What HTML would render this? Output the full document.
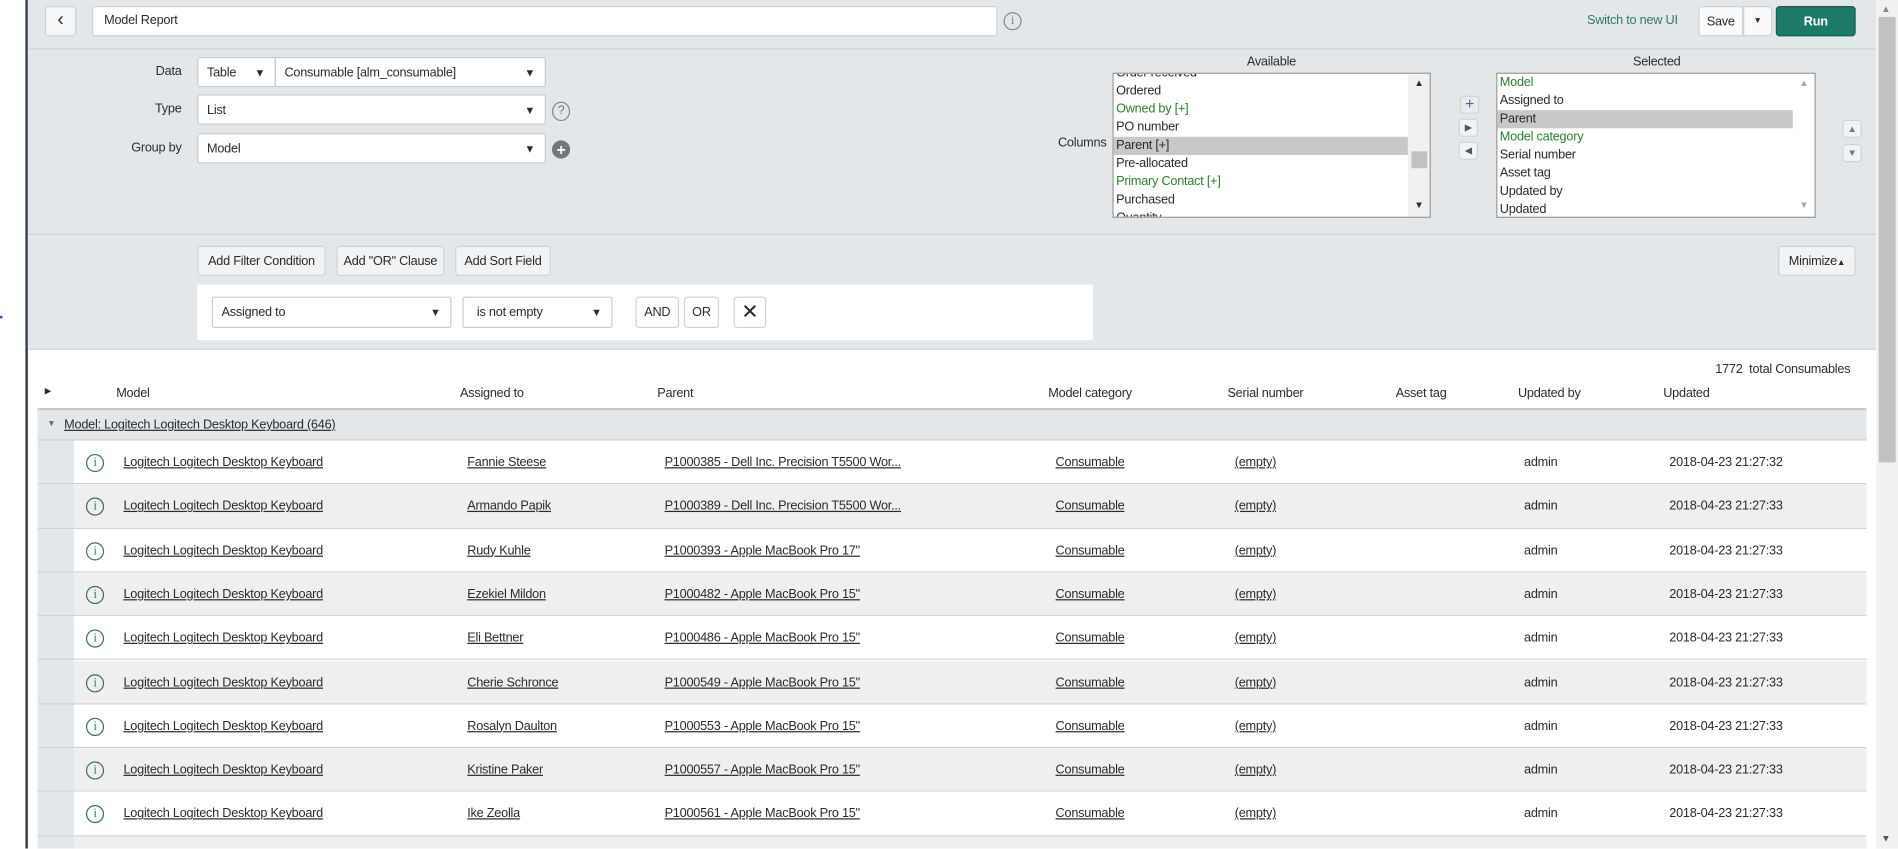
<!DOCTYPE html>
<html><head><meta charset="utf-8"><style>
*{box-sizing:border-box;margin:0;padding:0}
html,body{width:1898px;height:849px;overflow:hidden;background:#fff}
#s{position:absolute;left:0;top:0;width:1568px;height:701px;overflow:hidden;transform:scale(1.2105);transform-origin:0 0;font-family:"Liberation Sans",sans-serif;font-size:10.5px;letter-spacing:-0.2px;color:#2b2b2b;white-space:nowrap}
.a{position:absolute}
.box{position:absolute;background:#fff;border:1px solid #cfd3d6;border-radius:2px}
.btn{position:absolute;background:#f2f3f4;border:1px solid #cfd3d6;border-radius:3px;text-align:center;line-height:24px;color:#2b2b2b}
.sel{position:absolute;background:#fff;border:1px solid #c8ccd0;border-radius:2px;padding-left:7px;line-height:24px}
.sel:after{content:"▼";position:absolute;right:8px;top:0;font-size:9px}
.g{color:#2e7d32}
.li{height:15px;line-height:15px;padding-left:2px}
u{text-decoration:underline}
.row{position:absolute;left:31px;width:1511px;height:36.3px;border-bottom:1px solid #d0d3d6}
.row .c{position:absolute;top:0;line-height:36px}
.ic{position:absolute;left:40px;top:11px;width:15px;height:15px;border:1px solid #3c6e63;border-radius:50%;color:#3c6e63;font-size:10px;text-align:center;line-height:13px;font-family:"Liberation Serif",serif}
</style></head><body><div id="s">
<div class="a" style="left:0;top:0;width:21px;height:701px;background:#fff"></div>
<div class="a" style="left:0;top:261px;width:2px;height:2px;background:#3344aa"></div>
<div class="a" style="left:21px;top:0;width:2px;height:701px;background:#2f3b42"></div>
<div class="a" style="left:23px;top:0;width:1527px;height:288px;background:#e4e7ea"></div>
<div class="a" style="left:23px;top:40px;width:1527px;height:1px;background:#cfd3d6"></div>
<div class="a" style="left:23px;top:193px;width:1527px;height:1px;background:#cfd3d6"></div>
<div class="a" style="left:23px;top:288px;width:1527px;height:1px;background:#cfd3d6"></div>
<!-- scrollbar -->
<div class="a" style="left:1550px;top:0;width:18px;height:701px;background:#f1f1f1"></div>
<div class="a" style="left:1552px;top:14px;width:14px;height:368px;background:#c1c1c1"></div>
<div class="a" style="left:1554px;top:3px;font-size:8px;color:#888">▲</div>
<div class="a" style="left:1554px;top:688px;font-size:8px;color:#555">▼</div>
<!-- header -->
<div class="btn" style="left:37px;top:5px;width:26px;height:25px;font-size:16px;line-height:22px;background:#f5f6f7">‹</div>
<div class="box" style="left:76px;top:5px;width:748px;height:25px;line-height:23px;padding-left:9px">Model Report</div>
<div class="a" style="left:829px;top:10px;width:15px;height:15px;border:1px solid #888;border-radius:50%;text-align:center;font-size:10px;line-height:13px;color:#777;font-family:'Liberation Serif',serif">i</div>
<div class="a" style="left:1311px;top:11px;color:#2d7a6b">Switch to new UI</div>
<div class="btn" style="left:1403px;top:5px;width:37px;height:25px;background:#fafafa;border-radius:3px 0 0 3px">Save</div>
<div class="btn" style="left:1440px;top:5px;width:24px;height:25px;background:#fafafa;font-size:7px;border-radius:0 3px 3px 0">▼</div>
<div class="btn" style="left:1467px;top:5px;width:66px;height:25px;background:#1d7a69;border-color:#15604f;color:#fff;font-weight:bold">Run</div>
<!-- config -->
<div class="a" style="left:100px;top:53px;width:50px;text-align:right">Data</div>
<div class="sel" style="left:163px;top:47px;width:65px;height:25px">Table</div>
<div class="sel" style="left:227px;top:47px;width:224px;height:25px">Consumable [alm_consumable]</div>
<div class="a" style="left:100px;top:84px;width:50px;text-align:right">Type</div>
<div class="sel" style="left:163px;top:78px;width:288px;height:25px">List</div>
<div class="a" style="left:456px;top:84px;width:15px;height:16px;border:1px solid #888;border-radius:50%;text-align:center;font-size:10px;line-height:14px;color:#777">?</div>
<div class="a" style="left:90px;top:116px;width:60px;text-align:right">Group by</div>
<div class="sel" style="left:163px;top:110px;width:288px;height:25px">Model</div>
<div class="a" style="left:456px;top:116px;width:15px;height:15px;background:#777;border-radius:50%;text-align:center;font-size:13px;line-height:15px;color:#fff;font-weight:bold">+</div>
<div class="a" style="left:874px;top:112px">Columns</div>
<div class="a" style="left:1030px;top:45px">Available</div>
<div class="a" style="left:1349px;top:45px">Selected</div>
<div class="box" style="left:919px;top:60px;width:263px;height:120px;overflow:hidden;border-color:#999;border-radius:0">
 <div style="margin-top:-8px">
 <div class="li">Order received</div><div class="li">Ordered</div><div class="li g">Owned by [+]</div><div class="li">PO number</div><div class="li" style="background:#c8c8c8;width:244px">Parent [+]</div><div class="li">Pre-allocated</div><div class="li g">Primary Contact [+]</div><div class="li">Purchased</div><div class="li">Quantity</div></div>
 <div class="a" style="right:0;top:0;width:18px;height:118px;background:#f1f1f1"></div>
 <div class="a" style="right:2px;top:64px;width:13px;height:14px;background:#c1c1c1"></div>
 <div class="a" style="right:5px;top:3px;font-size:8px">▲</div><div class="a" style="right:5px;top:104px;font-size:8px">▼</div>
</div>
<div class="box" style="left:1236px;top:60px;width:264px;height:120px;overflow:hidden;border-color:#999;border-radius:0;padding-top:0">
 <div class="li g">Model</div><div class="li">Assigned to</div><div class="li" style="background:#c8c8c8;width:244px">Parent</div><div class="li g">Model category</div><div class="li">Serial number</div><div class="li">Asset tag</div><div class="li">Updated by</div><div class="li">Updated</div>
 <div class="a" style="right:5px;top:3px;font-size:8px;color:#aaa">▲</div><div class="a" style="right:5px;top:104px;font-size:8px;color:#aaa">▼</div>
</div>
<div class="btn" style="left:1206px;top:79px;width:16px;height:15px;line-height:12px;font-size:13px;color:#4a6a8a;background:#e9ecef">+</div>
<div class="btn" style="left:1205px;top:98px;width:16px;height:15px;line-height:13px;font-size:8px;color:#555">▶</div>
<div class="btn" style="left:1205px;top:117px;width:16px;height:15px;line-height:13px;font-size:8px;color:#555">◀</div>
<div class="btn" style="left:1522px;top:99px;width:16px;height:15px;line-height:13px;font-size:8px;color:#777">▲</div>
<div class="btn" style="left:1522px;top:119px;width:16px;height:15px;line-height:13px;font-size:8px;color:#777">▼</div>
<!-- filter -->
<div class="btn" style="left:163px;top:203px;width:106px;height:25px">Add Filter Condition</div>
<div class="btn" style="left:278px;top:203px;width:89px;height:25px">Add "OR" Clause</div>
<div class="btn" style="left:376px;top:203px;width:79px;height:25px">Add Sort Field</div>
<div class="btn" style="left:1469px;top:203px;width:64px;height:25px">Minimize<span style="font-size:7px">▲</span></div>
<div class="a" style="left:163px;top:235px;width:740px;height:46px;background:#fff"></div>
<div class="sel" style="left:175px;top:245px;width:198px;height:26px;line-height:25px">Assigned to</div>
<div class="sel" style="left:382px;top:245px;width:124px;height:26px;line-height:25px;padding-left:11px">is not empty</div>
<div class="btn" style="left:525px;top:245px;width:36px;height:26px;background:#fff">AND</div>
<div class="btn" style="left:565px;top:245px;width:29px;height:26px;background:#fff">OR</div>
<div class="btn" style="left:606px;top:245px;width:27px;height:26px;background:#fff;font-size:17px;line-height:24px">✕</div>
<!-- table -->
<div class="a" style="left:1417px;top:299px">1772&nbsp;&nbsp;total Consumables</div>
<div class="a" style="left:37px;top:319px;font-size:7px">▶</div>
<div class="a" style="left:96px;top:319px">Model</div>
<div class="a" style="left:380px;top:319px">Assigned to</div>
<div class="a" style="left:543px;top:319px">Parent</div>
<div class="a" style="left:866px;top:319px">Model category</div>
<div class="a" style="left:1014px;top:319px">Serial number</div>
<div class="a" style="left:1153px;top:319px">Asset tag</div>
<div class="a" style="left:1254px;top:319px">Updated by</div>
<div class="a" style="left:1374px;top:319px">Updated</div>
<div class="a" style="left:31px;top:337px;width:1511px;height:2px;background:#c8c8c8"></div>
<div class="a" style="left:31px;top:339px;width:1511px;height:25px;background:#e4e7ea;border-bottom:1px solid #ccc"></div>
<div class="a" style="left:39px;top:347px;font-size:7px;color:#666">▼</div>
<div class="a" style="left:53px;top:345px"><u>Model: Logitech Logitech Desktop Keyboard (646)</u></div>
<div class="a" style="left:31px;top:364px;width:30px;height:337px;background:#e4e7ea"></div>

<div class="row" style="top:364px;background:linear-gradient(90deg,#e4e7ea 30px,#fff 30px)"><div class="ic">i</div><div class="c" style="left:71px"><u>Logitech Logitech Desktop Keyboard</u></div><div class="c" style="left:355px"><u>Fannie Steese</u></div><div class="c" style="left:518px"><u>P1000385 - Dell Inc. Precision T5500 Wor...</u></div><div class="c" style="left:841px"><u>Consumable</u></div><div class="c" style="left:989px"><u>(empty)</u></div><div class="c" style="left:1228px">admin</div><div class="c" style="left:1348px">2018-04-23 21:27:32</div></div>
<div class="row" style="top:400.3px;background:linear-gradient(90deg,#e4e7ea 30px,#efefef 30px)"><div class="ic">i</div><div class="c" style="left:71px"><u>Logitech Logitech Desktop Keyboard</u></div><div class="c" style="left:355px"><u>Armando Papik</u></div><div class="c" style="left:518px"><u>P1000389 - Dell Inc. Precision T5500 Wor...</u></div><div class="c" style="left:841px"><u>Consumable</u></div><div class="c" style="left:989px"><u>(empty)</u></div><div class="c" style="left:1228px">admin</div><div class="c" style="left:1348px">2018-04-23 21:27:33</div></div>
<div class="row" style="top:436.6px;background:linear-gradient(90deg,#e4e7ea 30px,#fff 30px)"><div class="ic">i</div><div class="c" style="left:71px"><u>Logitech Logitech Desktop Keyboard</u></div><div class="c" style="left:355px"><u>Rudy Kuhle</u></div><div class="c" style="left:518px"><u>P1000393 - Apple MacBook Pro 17"</u></div><div class="c" style="left:841px"><u>Consumable</u></div><div class="c" style="left:989px"><u>(empty)</u></div><div class="c" style="left:1228px">admin</div><div class="c" style="left:1348px">2018-04-23 21:27:33</div></div>
<div class="row" style="top:472.9px;background:linear-gradient(90deg,#e4e7ea 30px,#efefef 30px)"><div class="ic">i</div><div class="c" style="left:71px"><u>Logitech Logitech Desktop Keyboard</u></div><div class="c" style="left:355px"><u>Ezekiel Mildon</u></div><div class="c" style="left:518px"><u>P1000482 - Apple MacBook Pro 15"</u></div><div class="c" style="left:841px"><u>Consumable</u></div><div class="c" style="left:989px"><u>(empty)</u></div><div class="c" style="left:1228px">admin</div><div class="c" style="left:1348px">2018-04-23 21:27:33</div></div>
<div class="row" style="top:509.2px;background:linear-gradient(90deg,#e4e7ea 30px,#fff 30px)"><div class="ic">i</div><div class="c" style="left:71px"><u>Logitech Logitech Desktop Keyboard</u></div><div class="c" style="left:355px"><u>Eli Bettner</u></div><div class="c" style="left:518px"><u>P1000486 - Apple MacBook Pro 15"</u></div><div class="c" style="left:841px"><u>Consumable</u></div><div class="c" style="left:989px"><u>(empty)</u></div><div class="c" style="left:1228px">admin</div><div class="c" style="left:1348px">2018-04-23 21:27:33</div></div>
<div class="row" style="top:545.5px;background:linear-gradient(90deg,#e4e7ea 30px,#efefef 30px)"><div class="ic">i</div><div class="c" style="left:71px"><u>Logitech Logitech Desktop Keyboard</u></div><div class="c" style="left:355px"><u>Cherie Schronce</u></div><div class="c" style="left:518px"><u>P1000549 - Apple MacBook Pro 15"</u></div><div class="c" style="left:841px"><u>Consumable</u></div><div class="c" style="left:989px"><u>(empty)</u></div><div class="c" style="left:1228px">admin</div><div class="c" style="left:1348px">2018-04-23 21:27:33</div></div>
<div class="row" style="top:581.8px;background:linear-gradient(90deg,#e4e7ea 30px,#fff 30px)"><div class="ic">i</div><div class="c" style="left:71px"><u>Logitech Logitech Desktop Keyboard</u></div><div class="c" style="left:355px"><u>Rosalyn Daulton</u></div><div class="c" style="left:518px"><u>P1000553 - Apple MacBook Pro 15"</u></div><div class="c" style="left:841px"><u>Consumable</u></div><div class="c" style="left:989px"><u>(empty)</u></div><div class="c" style="left:1228px">admin</div><div class="c" style="left:1348px">2018-04-23 21:27:33</div></div>
<div class="row" style="top:618.1px;background:linear-gradient(90deg,#e4e7ea 30px,#efefef 30px)"><div class="ic">i</div><div class="c" style="left:71px"><u>Logitech Logitech Desktop Keyboard</u></div><div class="c" style="left:355px"><u>Kristine Paker</u></div><div class="c" style="left:518px"><u>P1000557 - Apple MacBook Pro 15"</u></div><div class="c" style="left:841px"><u>Consumable</u></div><div class="c" style="left:989px"><u>(empty)</u></div><div class="c" style="left:1228px">admin</div><div class="c" style="left:1348px">2018-04-23 21:27:33</div></div>
<div class="row" style="top:654.4px;background:linear-gradient(90deg,#e4e7ea 30px,#fff 30px)"><div class="ic">i</div><div class="c" style="left:71px"><u>Logitech Logitech Desktop Keyboard</u></div><div class="c" style="left:355px"><u>Ike Zeolla</u></div><div class="c" style="left:518px"><u>P1000561 - Apple MacBook Pro 15"</u></div><div class="c" style="left:841px"><u>Consumable</u></div><div class="c" style="left:989px"><u>(empty)</u></div><div class="c" style="left:1228px">admin</div><div class="c" style="left:1348px">2018-04-23 21:27:33</div></div>
<div class="row" style="top:690.7px;background:linear-gradient(90deg,#e4e7ea 30px,#efefef 30px)"></div>
</div></body></html>
